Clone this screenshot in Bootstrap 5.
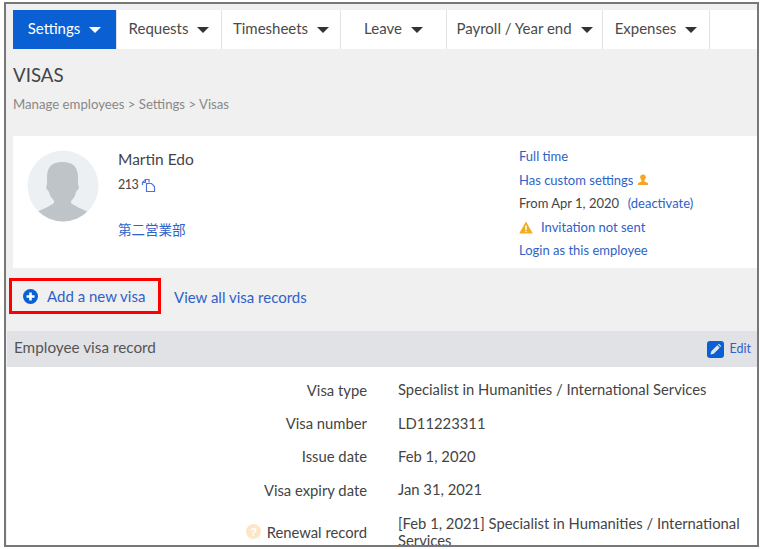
<!DOCTYPE html>
<html lang="en">
<head>
<meta charset="utf-8">
<title>Visas</title>
<link rel="stylesheet" href="https://cdn.jsdelivr.net/npm/bootstrap@5.3.0/dist/css/bootstrap.min.css">
<style>
html,body{height:549px;overflow:hidden;background:#fff}
body{font-family:"Lato","Noto Sans CJK JP",sans-serif;font-size:15px;color:#444;padding:2px 2px 2px 4px}
a{color:#2f62c8;text-decoration:none}
.shot-frame{height:545px;border:2px solid #777;background:#f0f0f0;overflow:hidden;padding-top:6px}
.top-menu{margin-left:7px;height:39px;background:#fff}
.top-item{height:39px;border-right:1px solid #e2e2e2;color:#4a4a4a;font-size:15px;display:flex;align-items:center;justify-content:center;gap:9px;padding-bottom:2px}
.top-item.on{background:#0a5fd3;color:#fff}
.caret{width:0;height:0;border-left:6.5px solid transparent;border-right:6.5px solid transparent;border-top:6.5px solid currentColor;margin-top:3px}
.top-item:not(.on) .caret{border-top-color:#333}
.w1{width:104px}.w2{width:105px}.w3{width:119px}.w4{width:106px}.w5{width:156px}.w6{width:107px}
.page-title{margin:15px 0 0 7px;font-size:18.7px;line-height:22px;font-weight:400;color:#444}
.crumbs{margin:10px 0 0 7px;font-size:13.2px;line-height:16px;color:#888}
.person{margin:24px 0 0 7px;height:132px;background:#fff;position:relative}
.pic{position:absolute;left:14px;top:14px}
.who{position:absolute;left:105px;top:13px}
.who-name{font-size:15.5px;line-height:20px;color:#444}
.who-id{font-size:12.5px;letter-spacing:-.5px;line-height:18px;margin-top:7px;display:flex;align-items:center;gap:3px;color:#444}
.who-dept{font-size:13.5px;line-height:18px;margin-top:27px}
.facts{position:absolute;left:506px;top:9px;font-size:13px;line-height:23.6px}
.facts div{display:flex;align-items:center}
.from-gap{margin-left:2px}
.action-row{height:63px;display:flex;align-items:center}
.boxed{margin-left:3px;width:152px;height:36px;border:3px solid #f00;display:flex;align-items:center;padding:1px 0 0 11px;gap:9px;font-size:15px;margin-top:-7px}
.plain-link{margin-left:13px;font-size:15px;margin-top:-5px}
.rec-head{margin-left:1px;height:36px;background:#e1e2e6;display:flex;align-items:center;justify-content:space-between;padding:0 6px 0 7px;font-size:15.3px;color:#555}
.rec-head>span{margin-top:-3px}
.rec-edit{display:flex;align-items:center;gap:6px;font-size:12.5px}
.rec-body{margin-left:1px;background:#fff;height:190px;padding-top:6px}
.rec-row{display:flex;height:33.4px;align-items:center;font-size:14.8px;color:#444}
.rec-l{width:360px;text-align:right;display:flex;justify-content:flex-end;align-items:center;gap:6px}
.rec-v{margin-left:31px;width:350px;line-height:17px}
.rec-row.tall{height:auto;align-items:flex-start;margin-top:8px}
.rec-row.tall .rec-l{margin-top:6px}
</style>
</head>
<body>
<div class="shot-frame">
  <div class="top-menu d-flex">
    <div class="top-item on w1">Settings <span class="caret"></span></div>
    <div class="top-item w2">Requests <span class="caret"></span></div>
    <div class="top-item w3">Timesheets <span class="caret"></span></div>
    <div class="top-item w4">Leave <span class="caret"></span></div>
    <div class="top-item w5">Payroll / Year end <span class="caret"></span></div>
    <div class="top-item w6">Expenses <span class="caret"></span></div>
  </div>
  <h1 class="page-title">VISAS</h1>
  <div class="crumbs">Manage employees &gt; Settings &gt; Visas</div>
  <div class="person">
    <svg class="pic" width="72" height="72" viewBox="0 0 72 72"><defs><clipPath id="cc"><circle cx="36" cy="36" r="35.5"/></clipPath></defs><circle cx="36" cy="36" r="35.5" fill="#edf0f3"/><g clip-path="url(#cc)"><path d="M35.500 12C25 12 20 17 20 27v7l-1 4 3 4c1 5 4 7 5 9v2c-5 4-14 7-21 11v8h59v-8c-7-4-16-7-21-11v-2c2-2 4-4 5-9l3-4-1-4v-7c0-10-5-15-15.500-15z" fill="#bfc4c9"/></g></svg>
    <div class="who">
      <div class="who-name">Martin Edo</div>
      <div class="who-id">213 <svg width="15" height="15" viewBox="0 0 15 15" fill="none" stroke="#4f74d8" stroke-width="1.200"><path d="M1.500 7V4.500l3-3h3.500v3"/><path d="M4.500 1.500v3h-3"/><path d="M5.500 5.500h5l3 3v5h-8z"/></svg></div>
      <div class="who-dept"><a href="#">第二営業部</a></div>
    </div>
    <div class="facts">
      <div><a href="#">Full time</a></div>
      <div><a href="#">Has custom settings</a><svg class="ms-1" width="12" height="12" viewBox="0 0 12 12" fill="#f5a623"><circle cx="6" cy="3.200" r="2.800"/><path d="M4.500 5.500h3v2l3.500 1.500v2H1V9l3.500-1.500z"/></svg></div>
      <div>From Apr 1, 2020<a class="from-gap" href="#">&nbsp;&nbsp;(deactivate)</a></div>
      <div><svg width="14" height="13" viewBox="0 0 14 13"><path d="M7 .5 13.800 12.500H.2z" fill="#f0ad1f"/><rect x="6.300" y="4.500" width="1.400" height="4.500" fill="#fff"/><rect x="6.300" y="9.800" width="1.400" height="1.400" fill="#fff"/></svg><a class="ms-2" href="#">Invitation not sent</a></div>
      <div><a href="#">Login as this employee</a></div>
    </div>
  </div>
  <div class="action-row">
    <a class="boxed" href="#"><svg width="15" height="15" viewBox="0 0 15 15"><circle cx="7.500" cy="7.500" r="7.500" fill="#0a5fd3"/><path d="M6.200 3.500h2.600v2.700h2.700v2.600H8.800v2.700H6.200V8.800H3.500V6.200h2.700z" fill="#fff"/></svg>Add a new visa</a>
    <a class="plain-link" href="#">View all visa records</a>
  </div>
  <div class="rec-head">
    <span>Employee visa record</span>
    <a class="rec-edit" href="#"><svg width="17" height="17" viewBox="0 0 17 17"><rect width="17" height="17" rx="3" fill="#0a5fd3"/><path d="M3.500 13.500l.8-3.200 6-6 2.400 2.400-6 6zM11 3.500l.8-.8 2.400 2.400-.8.800z" fill="#dfe6f5"/></svg>Edit</a>
  </div>
  <div class="rec-body">
    <div class="rec-row"><div class="rec-l">Visa type</div><div class="rec-v">Specialist in Humanities / International Services</div></div>
    <div class="rec-row"><div class="rec-l">Visa number</div><div class="rec-v">LD11223311</div></div>
    <div class="rec-row"><div class="rec-l">Issue date</div><div class="rec-v">Feb 1, 2020</div></div>
    <div class="rec-row"><div class="rec-l">Visa expiry date</div><div class="rec-v">Jan 31, 2021</div></div>
    <div class="rec-row tall"><div class="rec-l"><svg width="15" height="15" viewBox="0 0 15 15"><circle cx="7.500" cy="7.500" r="7.500" fill="#fde6c8"/><text x="7.500" y="11.500" font-size="11" font-weight="700" text-anchor="middle" fill="#fff" font-family="Liberation Sans">?</text></svg>Renewal record</div><div class="rec-v">[Feb 1, 2021] Specialist in Humanities / International Services</div></div>
  </div>
</div>
<script src="https://cdn.jsdelivr.net/npm/bootstrap@5.3.0/dist/js/bootstrap.bundle.min.js"></script>
</body>
</html>
